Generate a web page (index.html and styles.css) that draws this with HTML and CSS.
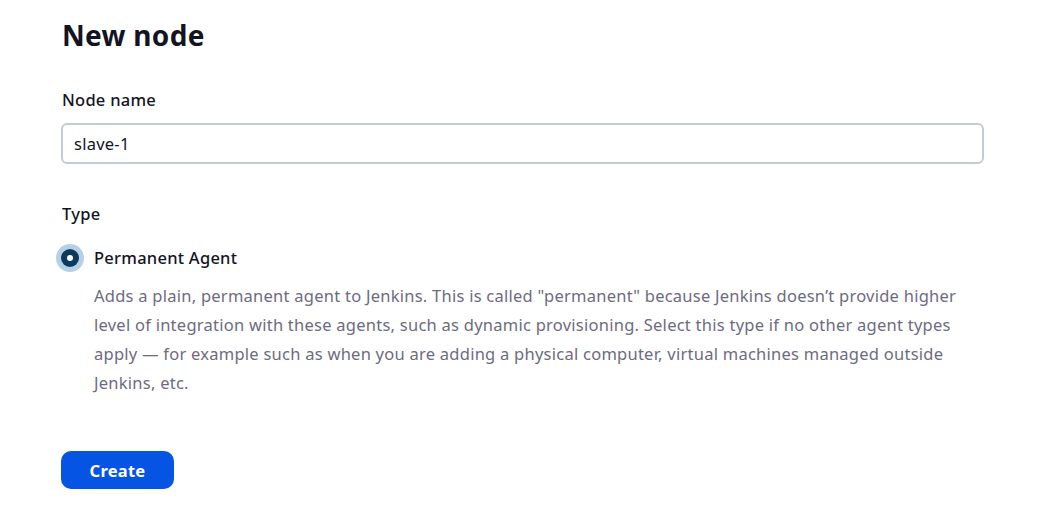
FILE: index.html
```html
<!DOCTYPE html>
<html lang="en">
<head>
  <meta charset="UTF-8">
  <meta name="viewport" content="width=device-width, initial-scale=1.0">
  <title>New node</title>
  <link rel="stylesheet" href="styles.css">
</head>
<body>
  <div class="page">
    <h1>New node</h1>

    <form class="new-node">
      <!-- Name -->
      <div class="field field-name">
        <label class="field-label" for="name">Node name</label>
        <input class="text-input" id="name" type="text" value="slave-1">
      </div>

      <!-- Type -->
      <div class="field field-type">
        <div class="field-label">Type</div>
        <label class="radio">
          <span class="radio-dot"></span>
          <span class="radio-title">Permanent Agent</span>
        </label>
        <p class="radio-desc">Adds a plain, permanent agent to Jenkins. This is called "permanent" because Jenkins doesn’t provide higher level of integration with these agents, such as dynamic provisioning. Select this type if no other agent types apply — for example such as when you are adding a physical computer, virtual machines managed outside Jenkins, etc.</p>
      </div>

      <button class="btn-primary" type="button">Create</button>
    </form>
  </div>
</body>
</html>
```

FILE: styles.css
```css
body {
  margin: 0;
  padding: 0;
  background: #fff;
  font-family: "Noto Sans", "Open Sans", sans-serif;
  font-size: 16.5px;
  letter-spacing: 0.25px;
  color: #14141f;
}

.page {
  padding: 15px 65px 0 61px;
}

h1 {
  margin: 0 0 0 1px;
  font-size: 28px;
  line-height: 40px;
  font-weight: 700;
  letter-spacing: 0.3px;
}

.field-name {
  margin-top: 33px;
}

.field-type {
  margin-top: 38px;
}

.field-label {
  display: block;
  margin: 0 0 11px 1px;
  font-weight: 500;
  line-height: 24px;
}

.text-input {
  box-sizing: border-box;
  width: 100%;
  height: 41px;
  padding: 0 11px;
  border: 2px solid #c4ccd3;
  border-radius: 6px;
  font: inherit;
  letter-spacing: inherit;
  color: #14141f;
  outline: none;
}

.radio {
  display: flex;
  align-items: center;
  gap: 15px;
  margin-top: 20px;
}

.radio-dot {
  flex: none;
  width: 18px;
  height: 18px;
  border-radius: 50%;
  background: #0c3a5f;
  box-shadow: 0 0 0 5px #b7d0e5;
  display: flex;
  align-items: center;
  justify-content: center;
}

.radio-dot::after {
  content: "";
  width: 6px;
  height: 6px;
  border-radius: 50%;
  background: #fff;
}

.radio-title {
  font-weight: 500;
  line-height: 24px;
}

.radio-desc {
  margin: 11px 0 0 33px;
  color: #6d6b80;
  line-height: 29px;
}

.btn-primary {
  margin-top: 54px;
  width: 113px;
  height: 38px;
  border: none;
  border-radius: 10px;
  background: #0654e3;
  color: #fff;
  font: inherit;
  font-weight: 700;
  letter-spacing: inherit;
  cursor: pointer;
}
```
